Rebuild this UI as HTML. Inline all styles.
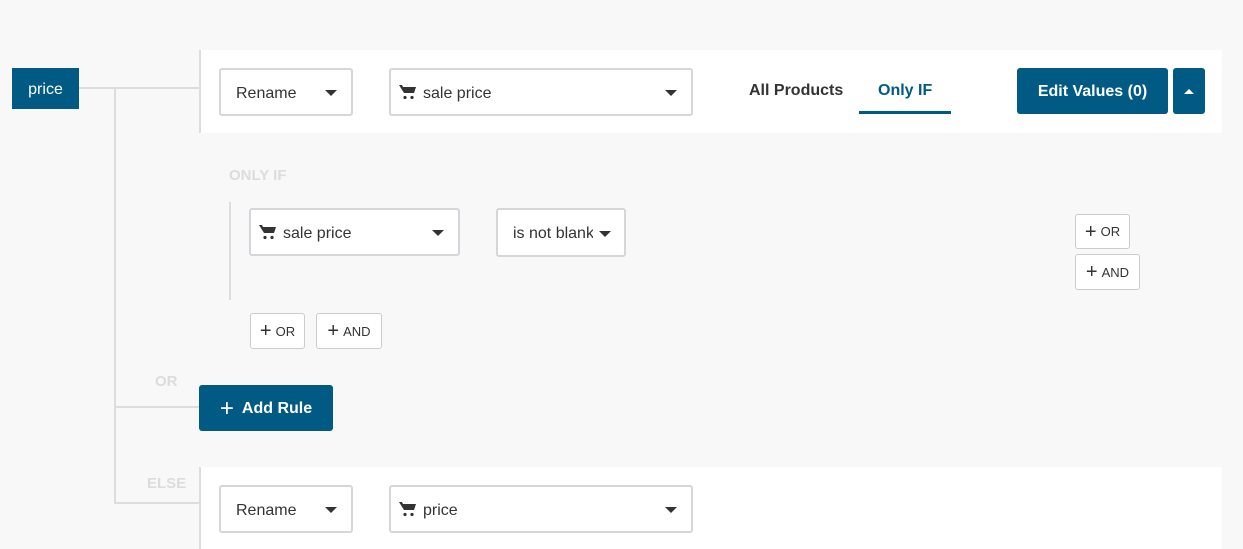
<!DOCTYPE html>
<html><head><style>
body{margin:0;width:1243px;height:549px;background:#f8f8f8;font-family:"Liberation Sans",sans-serif;position:relative;overflow:hidden}
.a{position:absolute}
.panel{position:absolute;background:#fff;border-left:2px solid #ddd}
.sel{position:absolute;box-sizing:border-box;background:#fff;border:2px solid #d4d6da;border-radius:3px;font-size:16px;color:#333;display:flex;align-items:center;padding-top:3px}
.car{position:absolute;right:14px;top:50%;margin-top:-2px;width:0;height:0;border-left:6px solid transparent;border-right:6px solid transparent;border-top:6px solid #333}
.ln{position:absolute;background:#ddd}
.sb{position:absolute;box-sizing:border-box;background:#fff;border:1px solid #ccc;border-radius:3px;font-size:13px;color:#333;display:flex;align-items:center;justify-content:center}
.sb b{font-size:20px;font-weight:normal;margin-right:4px;line-height:1}
.lbl{position:absolute;color:#dcdcdc;font-weight:bold;font-size:15px}
.btn{position:absolute;background:#005a84;color:#fff;border-radius:3px;font-weight:bold;display:flex;align-items:center;justify-content:center}
</style></head><body>
<div class="panel" style="left:199px;top:50px;width:1021px;height:83px"></div>
<div class="panel" style="left:199px;top:467px;width:1021px;height:82px"></div>
<div class="ln" style="left:79px;top:87px;width:121px;height:2px"></div>
<div class="ln" style="left:114px;top:88px;width:2px;height:416px"></div>
<div class="ln" style="left:114px;top:406px;width:86px;height:2px"></div>
<div class="ln" style="left:114px;top:502px;width:86px;height:2px"></div>
<div class="ln" style="left:229px;top:202px;width:2px;height:98px"></div>
<div class="btn" style="left:12px;top:68px;width:67px;height:41px;border-radius:0;font-weight:normal;font-size:16px;padding-top:2px;box-sizing:border-box">price</div>
<svg width="0" height="0" style="position:absolute"><defs><symbol id="cart" viewBox="0 0 18 16"><path d="M0 1h3l1 2h13l-2 6H5z" fill="#333"/><circle cx="6" cy="13.5" r="1.6" fill="#333"/><circle cx="13" cy="13.5" r="1.6" fill="#333"/></symbol></defs></svg>
<div class="sel" style="left:219px;top:68px;width:134px;height:48px;padding-left:15px">Rename<span class="car"></span></div>
<div class="sel" style="left:389px;top:68px;width:304px;height:48px;padding-left:8px"><svg width="18" height="16" style="margin-right:6px;margin-top:-3px"><use href="#cart"/></svg>sale price<span class="car"></span></div>
<div class="a" style="left:749px;top:82px;font-size:16px;font-weight:bold;color:#333">All Products</div>
<div class="a" style="left:878px;top:82px;font-size:16px;font-weight:bold;color:#005a84">Only IF</div>
<div class="a" style="left:859px;top:111px;width:92px;height:3px;background:#005a84"></div>
<div class="btn" style="left:1017px;top:68px;width:151px;height:46px;font-size:16px;padding-top:2px;box-sizing:border-box">Edit Values (0)</div>
<div class="btn" style="left:1173px;top:68px;width:32px;height:46px"><span style="width:0;height:0;border-left:5px solid transparent;border-right:5px solid transparent;border-bottom:5px solid #fff"></span></div>
<div class="lbl" style="left:229px;top:167px">ONLY IF</div>
<div class="sel" style="left:249px;top:208px;width:211px;height:48px;padding-left:8px"><svg width="18" height="16" style="margin-right:6px;margin-top:-3px"><use href="#cart"/></svg>sale price<span class="car"></span></div>
<div class="sel" style="left:496px;top:208px;width:130px;height:49px;padding-left:15px;overflow:hidden;white-space:nowrap"><span style="width:80px;overflow:hidden;display:inline-block">is not blank</span><span class="car" style="right:13px"></span></div>
<div class="sb" style="left:1075px;top:214px;width:55px;height:35px"><b>+</b>OR</div>
<div class="sb" style="left:1075px;top:254px;width:65px;height:36px"><b>+</b>AND</div>
<div class="sb" style="left:250px;top:313px;width:55px;height:36px"><b>+</b>OR</div>
<div class="sb" style="left:316px;top:313px;width:66px;height:36px"><b>+</b>AND</div>
<div class="lbl" style="left:155px;top:373px">OR</div>
<div class="btn" style="left:199px;top:385px;width:134px;height:46px;font-size:16px;padding-top:2px;box-sizing:border-box"><span style="font-size:24px;font-weight:normal;margin-right:8px;line-height:1">+</span>Add Rule</div>
<div class="lbl" style="left:147px;top:475px">ELSE</div>
<div class="sel" style="left:219px;top:485px;width:134px;height:48px;padding-left:15px">Rename<span class="car"></span></div>
<div class="sel" style="left:389px;top:485px;width:304px;height:48px;padding-left:8px"><svg width="18" height="16" style="margin-right:6px;margin-top:-3px"><use href="#cart"/></svg>price<span class="car"></span></div>
</body></html>
